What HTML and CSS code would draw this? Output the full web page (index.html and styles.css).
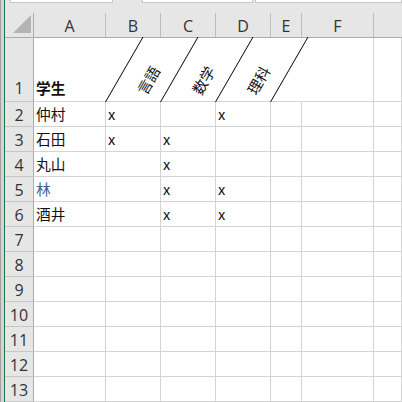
FILE: index.html
```html
<!DOCTYPE html>
<html lang="ja">
<head>
<meta charset="utf-8">
<link rel="stylesheet" href="styles.css">
</head>
<body>
<div class="app">
  <div class="side"></div>
  <div class="win">
    <div class="fbar">
      <div class="box namebox"></div>
      <div class="box fx1"></div>
      <div class="box fx2"></div>
    </div>
    <div class="sheet">
      <div class="ch corner"><span class="tri"></span></div>
      <div class="ch">A</div><div class="ch">B</div><div class="ch">C</div><div class="ch">D</div><div class="ch">E</div><div class="ch">F</div><div class="ch last"></div>

      <div class="rh r1">1</div>
      <div class="c r1 nor bold">学生</div>
      <div class="c r1 nor slantcell"><span class="slant"></span><span class="vtext">言語</span></div>
      <div class="c r1 nor slantcell"><span class="slant"></span><span class="vtext">数学</span></div>
      <div class="c r1 nor slantcell"><span class="slant"></span><span class="vtext">理科</span></div>
      <div class="c r1 nor slantcell"><span class="slant"></span></div>
      <div class="c r1"></div><div class="c r1"></div>

      <div class="rh">2</div><div class="c">仲村</div><div class="c">x</div><div class="c"></div><div class="c">x</div><div class="c"></div><div class="c"></div><div class="c"></div>
      <div class="rh">3</div><div class="c">石田</div><div class="c">x</div><div class="c">x</div><div class="c"></div><div class="c"></div><div class="c"></div><div class="c"></div>
      <div class="rh">4</div><div class="c">丸山</div><div class="c"></div><div class="c">x</div><div class="c"></div><div class="c"></div><div class="c"></div><div class="c"></div>
      <div class="rh">5</div><div class="c blue">林</div><div class="c"></div><div class="c">x</div><div class="c">x</div><div class="c"></div><div class="c"></div><div class="c"></div>
      <div class="rh">6</div><div class="c">酒井</div><div class="c"></div><div class="c">x</div><div class="c">x</div><div class="c"></div><div class="c"></div><div class="c"></div>
      <div class="rh">7</div><div class="c"></div><div class="c"></div><div class="c"></div><div class="c"></div><div class="c"></div><div class="c"></div><div class="c"></div>
      <div class="rh">8</div><div class="c"></div><div class="c"></div><div class="c"></div><div class="c"></div><div class="c"></div><div class="c"></div><div class="c"></div>
      <div class="rh">9</div><div class="c"></div><div class="c"></div><div class="c"></div><div class="c"></div><div class="c"></div><div class="c"></div><div class="c"></div>
      <div class="rh">10</div><div class="c"></div><div class="c"></div><div class="c"></div><div class="c"></div><div class="c"></div><div class="c"></div><div class="c"></div>
      <div class="rh">11</div><div class="c"></div><div class="c"></div><div class="c"></div><div class="c"></div><div class="c"></div><div class="c"></div><div class="c"></div>
      <div class="rh">12</div><div class="c"></div><div class="c"></div><div class="c"></div><div class="c"></div><div class="c"></div><div class="c"></div><div class="c"></div>
      <div class="rh">13</div><div class="c"></div><div class="c"></div><div class="c"></div><div class="c"></div><div class="c"></div><div class="c"></div><div class="c"></div>
    </div>
  </div>
</div>
</body>
</html>
```

FILE: styles.css
```css
* { box-sizing: border-box; }
html, body { margin: 0; padding: 0; background: #ffffff; }
body { width: 402px; height: 402px; overflow: hidden; }

.app {
  display: flex;
  width: 402px;
  height: 402px;
}

.side {
  width: 4px;
  background: #d4d4d4;
  border-left: 1px solid #a0a0a0;
}

.win {
  flex: 1;
  border-left: 1px solid #217346;
  display: flex;
  flex-direction: column;
  background: #e6e6e6;
  min-width: 0;
}

.fbar {
  height: 13px;
  display: flex;
  align-items: flex-start;
}

.box {
  height: 3px;
  background: #ffffff;
  border: 1px solid #c6c6c6;
  border-top: none;
}
.namebox { margin-left: 5px; width: 103px; }
.fx1 { margin-left: 29px; width: 111px; }
.fx2 { margin-left: 2px; flex: 1; }

.sheet {
  display: grid;
  grid-template-columns: 29px 72px 55px 55px 55px 31px 72px 1fr;
  grid-template-rows: 25px 64px repeat(12, 25px);
  font-family: "Noto Sans CJK JP", sans-serif;
  font-size: 14.7px;
  color: #111111;
  background: #ffffff;
}

.ch {
  background: #e6e6e6;
  border-right: 1px solid #bdbdbd;
  border-bottom: 1px solid #ababab;
  display: flex;
  align-items: center;
  justify-content: center;
  font-family: "Open Sans", "Noto Sans", sans-serif;
  font-size: 16px;
  color: #333333;
  line-height: 1;
  padding-top: 1px;
}
.ch.last { border-right: none; }

.corner {
  position: relative;
  border-right: 1px solid #ababab;
}
.tri {
  position: absolute;
  right: 2px;
  bottom: 4px;
  width: 0;
  height: 0;
  border-left: 18px solid transparent;
  border-bottom: 18px solid #b4b4b4;
}

.rh {
  background: #e6e6e6;
  border-right: 1px solid #ababab;
  border-bottom: 1px solid #c6c6c6;
  display: flex;
  align-items: center;
  justify-content: center;
  font-family: "Open Sans", "Noto Sans", sans-serif;
  font-size: 16px;
  color: #333333;
  line-height: 1;
  padding-top: 1px;
}
.rh.r1 { align-items: flex-end; padding-bottom: 5px; }

.c {
  background: #ffffff;
  border-right: 1px solid #d4d4d4;
  border-bottom: 1px solid #d4d4d4;
  display: flex;
  align-items: center;
  padding-left: 2px;
  padding-top: 1px;
  line-height: 1;
  white-space: nowrap;
}
.c.r1 { align-items: flex-end; padding-bottom: 5px; }
.c.nor { border-right-color: transparent; }
.bold { font-weight: bold; }
.blue { color: #3f5f8f; }

.c.r1.slantcell {
  position: relative;
  justify-content: center;
  align-items: center;
  padding: 0;
}
.slant {
  position: absolute;
  left: -1px;
  top: -1px;
  bottom: -1px;
  width: 0;
  border-left: 1px solid #000000;
  transform: skewX(-30deg);
  transform-origin: bottom left;
}
.vtext {
  display: inline-block;
  transform: translate(16px, 11px) rotate(-60deg);
  line-height: 1;
}
```
